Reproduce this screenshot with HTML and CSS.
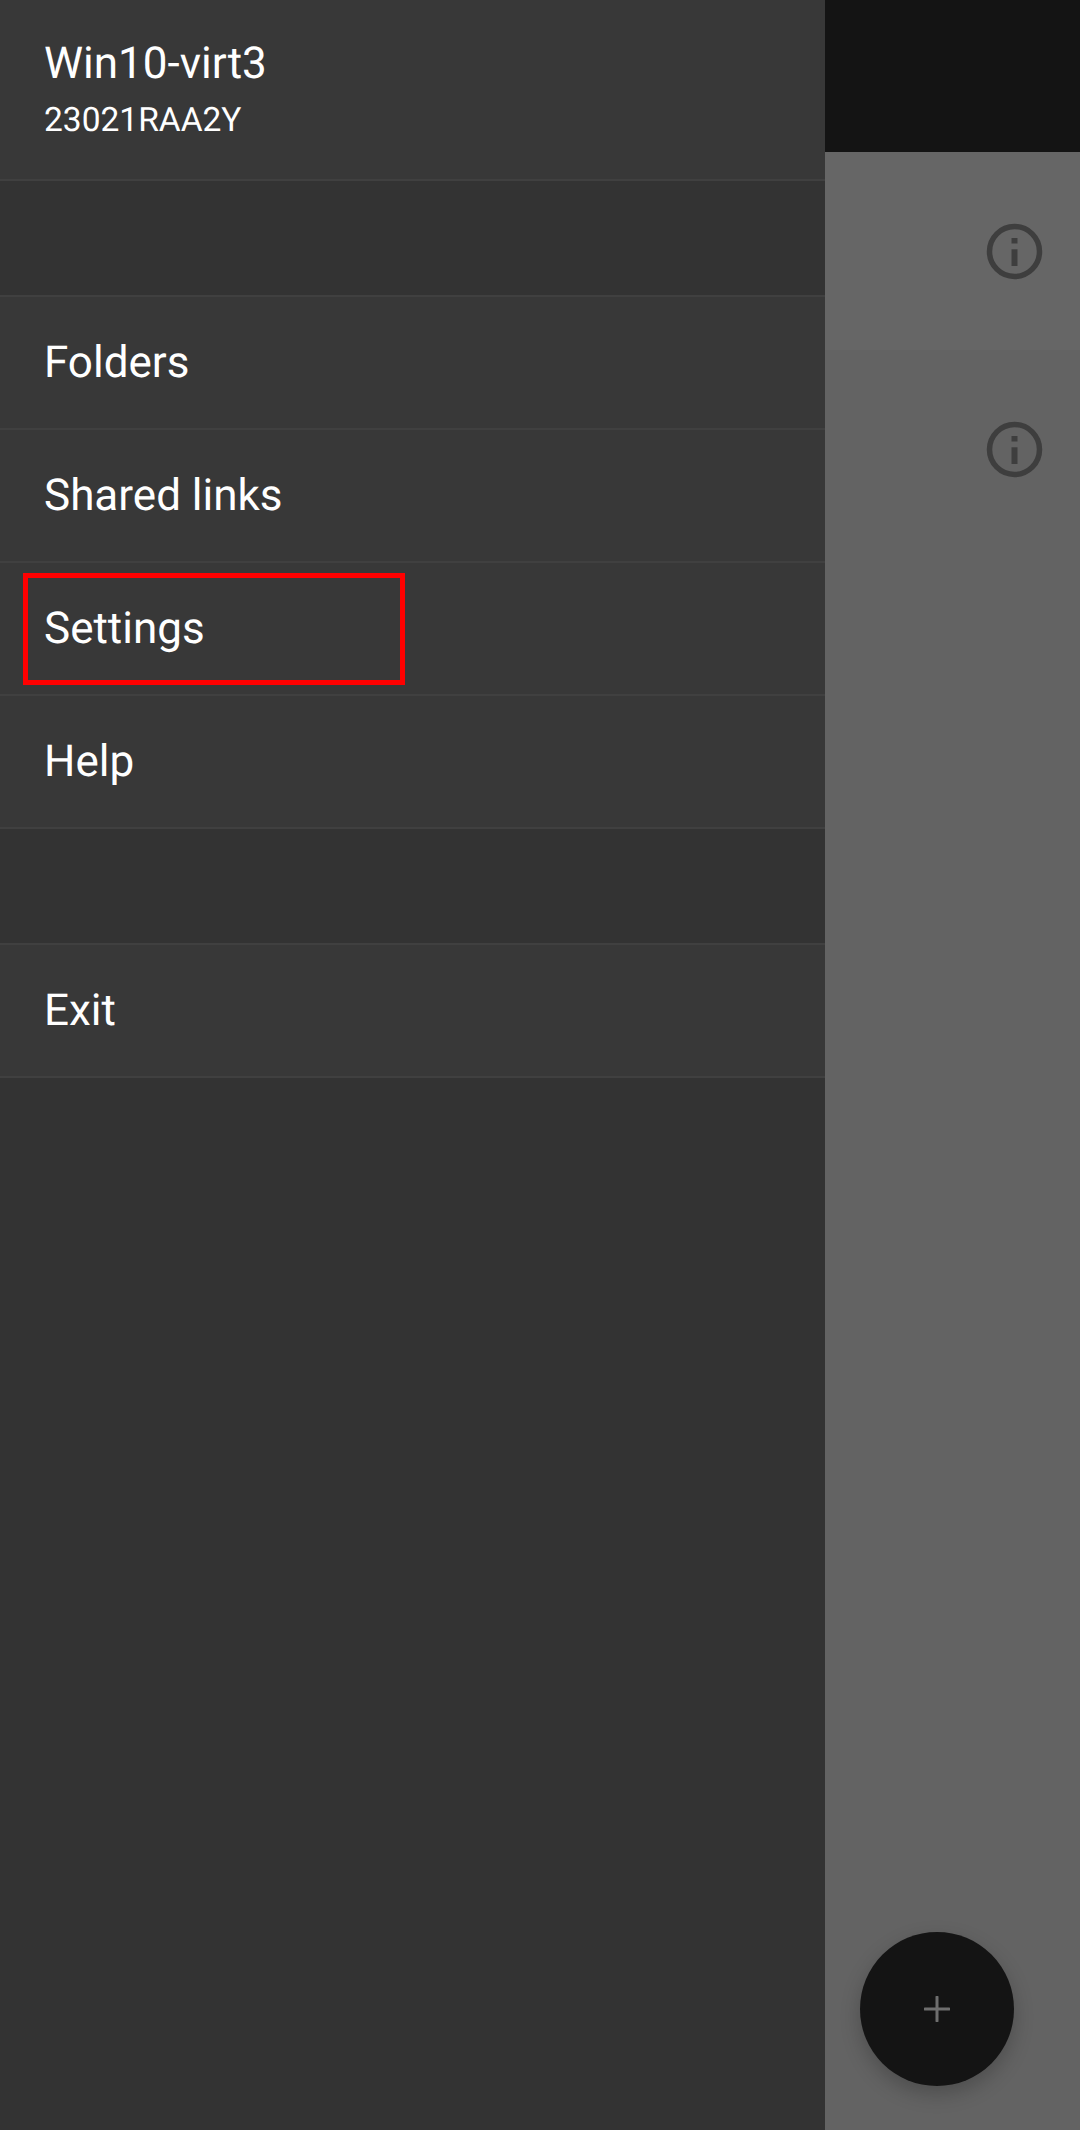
FILE: index.html
```html
<!DOCTYPE html>
<html lang="en">
<head>
<meta charset="utf-8">
<title>Menu</title>
<link rel="stylesheet" href="styles.css">
</head>
<body>
<div class="screen">
  <nav class="drawer">
    <header class="device">
      <div class="device-name">Win10-virt3</div>
      <div class="device-id">23021RAA2Y</div>
    </header>
    <div class="spacer"></div>
    <div class="row">Folders</div>
    <div class="row">Shared links</div>
    <div class="row">Settings<span class="highlight"></span></div>
    <div class="row">Help</div>
    <div class="spacer"></div>
    <div class="row">Exit</div>
  </nav>
  <main class="content">
    <div class="topbar"></div>
    <div class="item item-first">
      <svg class="info" viewBox="0 0 55 55"><circle cx="27.5" cy="27.5" r="25" fill="none" stroke="currentColor" stroke-width="5.5"/><rect x="24.5" y="14" width="6" height="5.5" fill="currentColor"/><rect x="24.5" y="25.3" width="6" height="16.7" fill="currentColor"/></svg>
    </div>
    <div class="item">
      <svg class="info" viewBox="0 0 55 55"><circle cx="27.5" cy="27.5" r="25" fill="none" stroke="currentColor" stroke-width="5.5"/><rect x="24.5" y="14" width="6" height="5.5" fill="currentColor"/><rect x="24.5" y="25.3" width="6" height="16.7" fill="currentColor"/></svg>
    </div>
    <div class="fab">
      <svg class="plus" viewBox="0 0 26 26"><path d="M13 1v24M1 13h24" fill="none" stroke="currentColor" stroke-width="3" stroke-linecap="round"/></svg>
    </div>
  </main>
</div>
</body>
</html>
```
FILE: styles.css
```css
* { box-sizing: border-box; }
html, body { margin: 0; padding: 0; }
body { background: #333333; font-family: Roboto, "Liberation Sans", sans-serif; text-rendering: geometricPrecision; }
.screen { display: flex; width: 1080px; height: 2130px; overflow: hidden; }
.drawer { width: 825px; flex: none; background: #333333; color: #ffffff; }
.device { height: 181px; padding: 35px 44px 0; background: #383838; border-bottom: 2px solid #404040; }
.device-name { font-size: 44px; line-height: 56px; }
.device-id { font-size: 33.5px; line-height: 44px; margin-top: 8px; }
.spacer { height: 116px; background: #333333; border-bottom: 2px solid #404040; }
.row { position: relative; height: 133px; padding: 0 44px 2px; display: flex; align-items: center; font-size: 44px; background: #383838; border-bottom: 2px solid #404040; }
.highlight { position: absolute; left: 23px; top: 10px; width: 382px; height: 112px; border: 5px solid #ff0000; }
.content { position: relative; flex: 1; background: #636363; }
.topbar { height: 152px; background: #141414; }
.item { height: 198px; display: flex; align-items: center; justify-content: flex-end; padding-right: 38.5px; color: #3e3e3e; }
.item-first { background: #666666; }
.info { width: 55px; height: 55px; display: block; overflow: visible; }
.fab { position: absolute; right: 66px; bottom: 44px; width: 154px; height: 154px; border-radius: 50%; background: #141414; color: #6e6e6e; display: flex; align-items: center; justify-content: center; box-shadow: 0 8px 20px rgba(0,0,0,.22); }
.plus { width: 26px; height: 26px; display: block; }
```
